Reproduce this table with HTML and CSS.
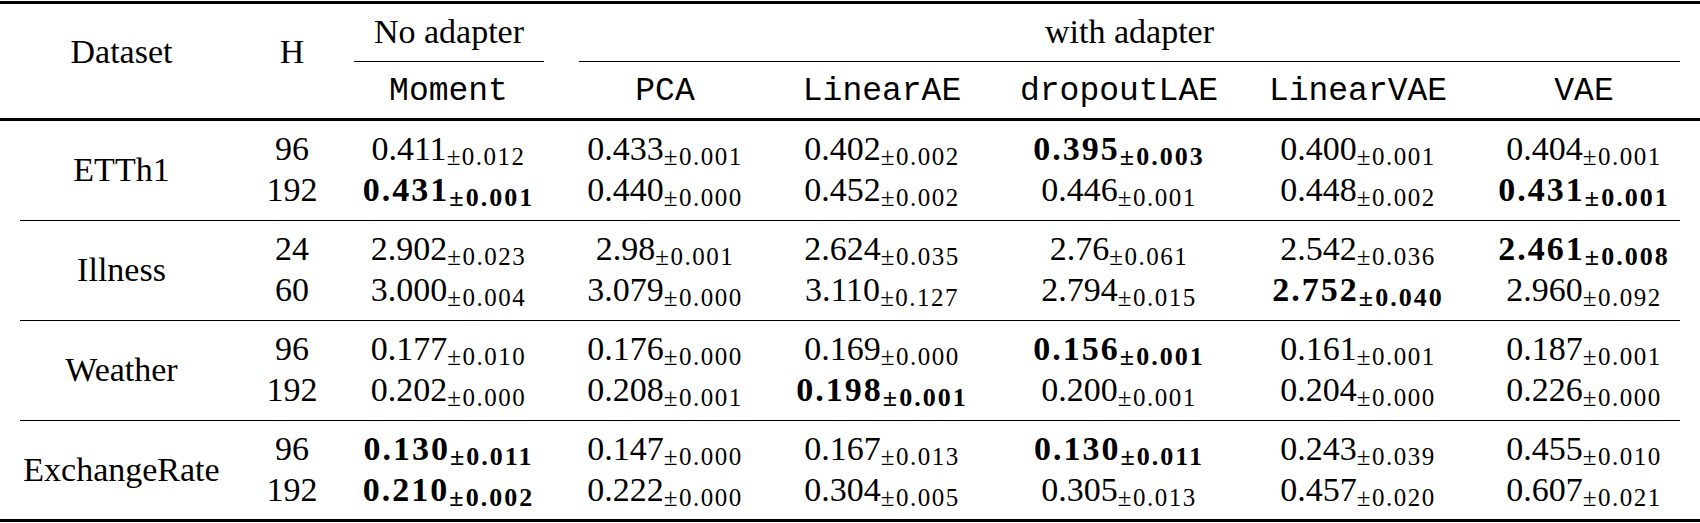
FILE: index.html
```html
<!DOCTYPE html>
<html>
<head>
<meta charset="utf-8">
<link rel="stylesheet" href="styles.css">
</head>
<body>
<div class="table">
  <div class="rule-thick"></div>
  <div class="head">
    <div class="hc span2">Dataset</div>
    <div class="hc span2">H</div>
    <div class="grp grp-no">No adapter</div>
    <div class="grp grp-with">with adapter</div>
    <div class="model">Moment</div>
    <div class="model">PCA</div>
    <div class="model">LinearAE</div>
    <div class="model">dropoutLAE</div>
    <div class="model">LinearVAE</div>
    <div class="model">VAE</div>
  </div>
  <div class="rule-thick"></div>

  <div class="group">
    <div class="ds">ETTh1</div>
    <div class="c">96</div>
    <div class="c"><span class="n">0.411</span><span class="s">±0.012</span></div>
    <div class="c"><span class="n">0.433</span><span class="s">±0.001</span></div>
    <div class="c"><span class="n">0.402</span><span class="s">±0.002</span></div>
    <div class="c b"><span class="n">0.395</span><span class="s">±0.003</span></div>
    <div class="c"><span class="n">0.400</span><span class="s">±0.001</span></div>
    <div class="c"><span class="n">0.404</span><span class="s">±0.001</span></div>
    <div class="c">192</div>
    <div class="c b"><span class="n">0.431</span><span class="s">±0.001</span></div>
    <div class="c"><span class="n">0.440</span><span class="s">±0.000</span></div>
    <div class="c"><span class="n">0.452</span><span class="s">±0.002</span></div>
    <div class="c"><span class="n">0.446</span><span class="s">±0.001</span></div>
    <div class="c"><span class="n">0.448</span><span class="s">±0.002</span></div>
    <div class="c b"><span class="n">0.431</span><span class="s">±0.001</span></div>
  </div>
  <div class="sep"></div>

  <div class="group">
    <div class="ds">Illness</div>
    <div class="c">24</div>
    <div class="c"><span class="n">2.902</span><span class="s">±0.023</span></div>
    <div class="c"><span class="n">2.98</span><span class="s">±0.001</span></div>
    <div class="c"><span class="n">2.624</span><span class="s">±0.035</span></div>
    <div class="c"><span class="n">2.76</span><span class="s">±0.061</span></div>
    <div class="c"><span class="n">2.542</span><span class="s">±0.036</span></div>
    <div class="c b"><span class="n">2.461</span><span class="s">±0.008</span></div>
    <div class="c">60</div>
    <div class="c"><span class="n">3.000</span><span class="s">±0.004</span></div>
    <div class="c"><span class="n">3.079</span><span class="s">±0.000</span></div>
    <div class="c"><span class="n">3.110</span><span class="s">±0.127</span></div>
    <div class="c"><span class="n">2.794</span><span class="s">±0.015</span></div>
    <div class="c b"><span class="n">2.752</span><span class="s">±0.040</span></div>
    <div class="c"><span class="n">2.960</span><span class="s">±0.092</span></div>
  </div>
  <div class="sep"></div>

  <div class="group">
    <div class="ds">Weather</div>
    <div class="c">96</div>
    <div class="c"><span class="n">0.177</span><span class="s">±0.010</span></div>
    <div class="c"><span class="n">0.176</span><span class="s">±0.000</span></div>
    <div class="c"><span class="n">0.169</span><span class="s">±0.000</span></div>
    <div class="c b"><span class="n">0.156</span><span class="s">±0.001</span></div>
    <div class="c"><span class="n">0.161</span><span class="s">±0.001</span></div>
    <div class="c"><span class="n">0.187</span><span class="s">±0.001</span></div>
    <div class="c">192</div>
    <div class="c"><span class="n">0.202</span><span class="s">±0.000</span></div>
    <div class="c"><span class="n">0.208</span><span class="s">±0.001</span></div>
    <div class="c b"><span class="n">0.198</span><span class="s">±0.001</span></div>
    <div class="c"><span class="n">0.200</span><span class="s">±0.001</span></div>
    <div class="c"><span class="n">0.204</span><span class="s">±0.000</span></div>
    <div class="c"><span class="n">0.226</span><span class="s">±0.000</span></div>
  </div>
  <div class="sep"></div>

  <div class="group last">
    <div class="ds">ExchangeRate</div>
    <div class="c">96</div>
    <div class="c b"><span class="n">0.130</span><span class="s">±0.011</span></div>
    <div class="c"><span class="n">0.147</span><span class="s">±0.000</span></div>
    <div class="c"><span class="n">0.167</span><span class="s">±0.013</span></div>
    <div class="c b"><span class="n">0.130</span><span class="s">±0.011</span></div>
    <div class="c"><span class="n">0.243</span><span class="s">±0.039</span></div>
    <div class="c"><span class="n">0.455</span><span class="s">±0.010</span></div>
    <div class="c">192</div>
    <div class="c b"><span class="n">0.210</span><span class="s">±0.002</span></div>
    <div class="c"><span class="n">0.222</span><span class="s">±0.000</span></div>
    <div class="c"><span class="n">0.304</span><span class="s">±0.005</span></div>
    <div class="c"><span class="n">0.305</span><span class="s">±0.013</span></div>
    <div class="c"><span class="n">0.457</span><span class="s">±0.020</span></div>
    <div class="c"><span class="n">0.607</span><span class="s">±0.021</span></div>
  </div>
  <div class="rule-thick"></div>
</div>
</body>
</html>
```
FILE: styles.css
```css
html, body {
  margin: 0;
  padding: 0;
  background: #ffffff;
}

body {
  font-family: "Liberation Serif", "Times New Roman", serif;
  color: #000000;
  font-size: 34px;
}

.table {
  width: 1700px;
  padding-top: 1px;
}

.rule-thick {
  height: 3px;
  background: #000000;
}

.head,
.group {
  display: grid;
  grid-template-columns: 243px 98px 215px 218px 216px 258px 220px 232px;
}

.head {
  grid-template-rows: 58px 56px;
}

.hc {
  grid-row: 1 / 3;
  text-align: center;
  line-height: 41px;
  padding-top: 27px;
}

.grp {
  box-sizing: border-box;
  height: 58px;
  padding-top: 7px;
  line-height: 41px;
  text-align: center;
  border-bottom: 1px solid #000000;
  white-space: nowrap;
}

.grp-no {
  grid-column: 3 / 4;
  margin: 0 12px 0 13px;
}

.grp-with {
  grid-column: 4 / 9;
  margin: 0 20px 0 23px;
}

.model {
  grid-row: 2 / 3;
  font-family: "Liberation Mono", "Courier New", monospace;
  font-size: 33px;
  line-height: 41px;
  padding-top: 9px;
  text-align: center;
  white-space: nowrap;
}

.group {
  grid-template-rows: 41px 41px;
  padding: 7px 0 10px;
}

.group.last {
  padding-bottom: 9px;
}

.ds {
  grid-row: 1 / 3;
  align-self: center;
  text-align: center;
  line-height: 41px;
  white-space: nowrap;
}

.c {
  height: 41px;
  line-height: 41px;
  text-align: center;
  white-space: nowrap;
}

.n {
  font-size: 34px;
}

.s {
  font-size: 25px;
  line-height: 1;
  letter-spacing: 1.5px;
  vertical-align: -5px;
}

.b {
  font-weight: 700;
}

.b .n {
  letter-spacing: 2px;
}

.b .s {
  font-size: 26px;
  letter-spacing: 2px;
}

.sep {
  height: 1px;
  margin: 0 20px;
  background: #000000;
}
```
